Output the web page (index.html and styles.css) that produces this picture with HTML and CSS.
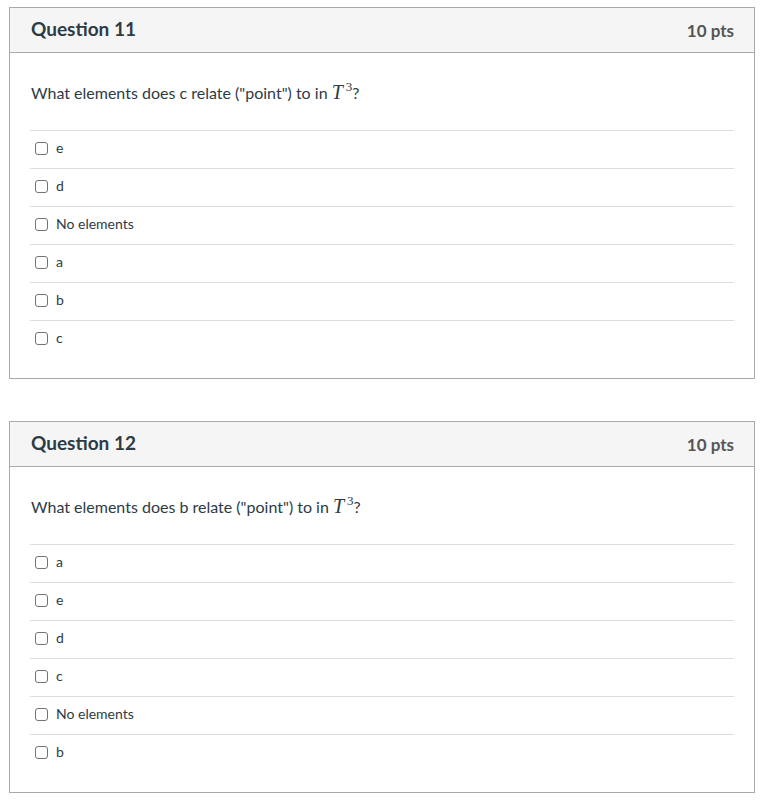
FILE: index.html
```html
<!DOCTYPE html>
<html lang="en">
<head>
<meta charset="utf-8">
<title>Quiz</title>
<link rel="stylesheet" href="styles.css">
</head>
<body>
<div class="page">
  <section class="card">
    <header class="card-head">
      <h2 class="title">Question 11</h2>
      <span class="pts">10 pts</span>
    </header>
    <div class="card-body">
      <p class="qtext">What elements does c relate ("point") to in <span class="math"><i>T</i><sup>3</sup></span>?</p>
      <ul class="answers">
        <li class="answer"><span class="box"></span><span class="label">e</span></li>
        <li class="answer"><span class="box"></span><span class="label">d</span></li>
        <li class="answer"><span class="box"></span><span class="label">No elements</span></li>
        <li class="answer"><span class="box"></span><span class="label">a</span></li>
        <li class="answer"><span class="box"></span><span class="label">b</span></li>
        <li class="answer"><span class="box"></span><span class="label">c</span></li>
      </ul>
    </div>
  </section>
  <section class="card">
    <header class="card-head">
      <h2 class="title">Question 12</h2>
      <span class="pts">10 pts</span>
    </header>
    <div class="card-body">
      <p class="qtext">What elements does b relate ("point") to in <span class="math"><i>T</i><sup>3</sup></span>?</p>
      <ul class="answers">
        <li class="answer"><span class="box"></span><span class="label">a</span></li>
        <li class="answer"><span class="box"></span><span class="label">e</span></li>
        <li class="answer"><span class="box"></span><span class="label">d</span></li>
        <li class="answer"><span class="box"></span><span class="label">c</span></li>
        <li class="answer"><span class="box"></span><span class="label">No elements</span></li>
        <li class="answer"><span class="box"></span><span class="label">b</span></li>
      </ul>
    </div>
  </section>
</div>
</body>
</html>
```

FILE: styles.css
```css
html, body {
  margin: 0;
  padding: 0;
  background: #ffffff;
}
body {
  font-family: Lato, "Open Sans", "Liberation Sans", sans-serif;
  color: #2d3b45;
}
.page {
  padding: 7px 8px 0 9px;
  display: flex;
  flex-direction: column;
  gap: 42px;
}
.card {
  border: 1px solid #aaaaaa;
  height: 370px;
  box-sizing: content-box;
}
.card-head {
  height: 44px;
  background: #f5f5f5;
  border-bottom: 1px solid #aaaaaa;
  display: flex;
  align-items: center;
  justify-content: space-between;
  padding: 0 20px 0 21px;
}
.title {
  margin: 0 0 3px 0;
  font-size: 19px;
  font-weight: 700;
  color: #2d3b45;
  line-height: 22px;
}
.pts {
  font-size: 17px;
  font-weight: 700;
  color: #555555;
  line-height: 20px;
  margin-top: 1px;
}
.card-body {
  padding: 0 20px;
}
.qtext {
  margin: 28px 0 0 1px;
  font-size: 16px;
  line-height: 22px;
  height: 49px;
  white-space: nowrap;
}
.math {
  font-family: "Liberation Serif", "DejaVu Serif", serif;
  font-size: 20px;
  color: #2d3b45;
}
.math i {
  font-style: italic;
}
.math sup {
  font-size: 13px;
  vertical-align: 0;
  position: relative;
  top: -8px;
  margin-left: 3px;
}
.answers {
  list-style: none;
  margin: 0;
  padding: 0;
}
.answer {
  border-top: 1px solid #dddddd;
  display: flex;
  align-items: center;
  padding-left: 5px;
  padding-bottom: 2px;
  box-sizing: border-box;
  height: 38px;
  gap: 8px;
}
.box {
  width: 11px;
  height: 11px;
  border: 1px solid #737373;
  border-radius: 3px;
  background: #fff;
  flex: none;
}
.label {
  font-size: 14px;
  color: #2d3b45;
  line-height: 16px;
  margin-bottom: 2px;
}
```
